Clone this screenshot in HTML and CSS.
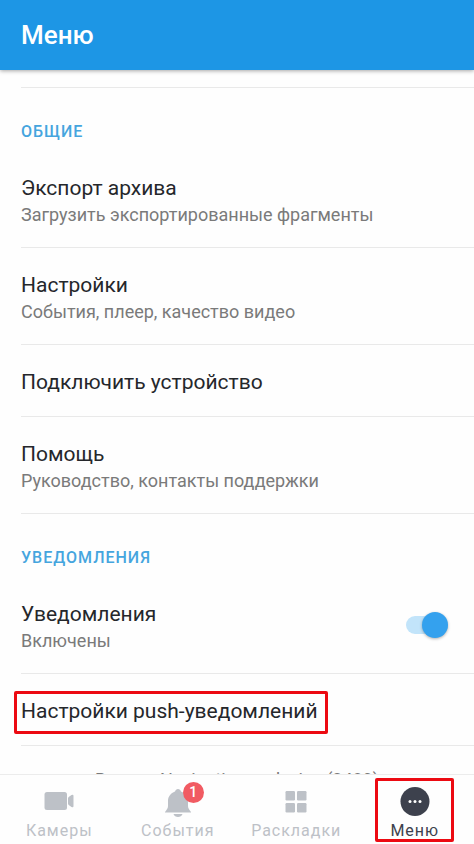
FILE: index.html
```html
<!DOCTYPE html>
<html lang="ru">
<head>
<meta charset="utf-8">
<meta name="viewport" content="width=device-width, initial-scale=1">
<title>Меню</title>
<link rel="stylesheet" href="styles.css">
</head>
<body>
<header class="app-bar"><h1>Меню</h1></header>
<main class="content">
  <section class="group">
    <h2 class="group-title">Общие</h2>
    <a class="row" href="#"><span class="title">Экспорт архива</span><span class="note">Загрузить экспортированные фрагменты</span></a>
    <a class="row" href="#"><span class="title">Настройки</span><span class="note">События, плеер, качество видео</span></a>
    <a class="row" href="#"><span class="title">Подключить устройство</span></a>
    <a class="row" href="#"><span class="title">Помощь</span><span class="note">Руководство, контакты поддержки</span></a>
  </section>
  <section class="group">
    <h2 class="group-title">Уведомления</h2>
    <div class="row row-switch">
      <label class="switch-label" for="notifications"><span class="title">Уведомления</span><span class="note">Включены</span></label>
      <input class="switch" id="notifications" type="checkbox" role="switch" checked>
    </div>
    <a class="row" href="#"><span class="title marked">Настройки push-уведомлений</span></a>
  </section>
  <p class="version">Версия Navigation andevice (2489)</p>
</main>
<nav class="tabs">
  <a class="tab" href="#">
    <svg class="icon" viewBox="0 0 32 32" aria-hidden="true"><rect x="1.500" y="7" width="22.500" height="18" rx="2.500"/><path d="M25 13.500Q25 12.500 26 11.800L28.500 10Q30.500 9 30.500 11V21Q30.500 23 28.500 22L26 20.200Q25 19.500 25 18.500Z"/></svg>
    <span>Камеры</span>
  </a>
  <a class="tab" href="#">
    <span class="icon-wrap">
      <svg class="icon" viewBox="0 0 32 32" aria-hidden="true"><path d="M16 4C14.500 4 13.500 5 13 6.500C8.800 8 6 11.500 6 16V21C6 23 5 24.500 3 27V27.500H29V27C27 24.500 26 23 26 21V16C26 11.500 23.200 8 19 6.500C18.500 5 17.500 4 16 4ZM11.500 29H20.500C19.500 33 12.500 33 11.500 29Z"/></svg>
      <span class="badge">1</span>
    </span>
    <span>События</span>
  </a>
  <a class="tab" href="#">
    <svg class="icon" viewBox="0 0 32 32" aria-hidden="true"><rect x="5.500" y="6" width="9.500" height="9.500" rx="1.200"/><rect x="17" y="6" width="9.500" height="9.500" rx="1.200"/><rect x="5.500" y="18" width="9.500" height="9.500" rx="1.200"/><rect x="17" y="18" width="9.500" height="9.500" rx="1.200"/></svg>
    <span>Раскладки</span>
  </a>
  <a class="tab tab-active" href="#" aria-current="page">
    <svg class="icon" viewBox="0 0 32 32" aria-hidden="true"><circle cx="16" cy="16.500" r="14.500"/><g fill="#fff"><circle cx="11" cy="16.500" r="1.500"/><circle cx="16" cy="16.500" r="1.500"/><circle cx="21" cy="16.500" r="1.500"/></g></svg>
    <span>Меню</span>
  </a>
</nav>
</body>
</html>
```
FILE: styles.css
```css
* { box-sizing: border-box; }

body {
  margin: 0;
  height: 100vh;
  display: flex;
  flex-direction: column;
  background: #fefefe;
  color: #25272b;
  font-family: Roboto, "Liberation Sans", sans-serif;
}

a { color: inherit; text-decoration: none; }
h1, h2, p { margin: 0; }

.app-bar {
  flex: none;
  height: 70px;
  padding: 0 21px;
  display: flex;
  align-items: center;
  background: #1d96e5;
  color: #fff;
  box-shadow: 0 1px 4px rgba(0, 0, 0, 0.35);
  z-index: 1;
}

.app-bar h1 { font-size: 26px; line-height: 32px; font-weight: 500; }

.content {
  flex: 1;
  min-height: 0;
  overflow: hidden;
  padding-top: 17px;
}

.group { margin-left: 21px; }
.group:first-child { border-top: 1px solid #e9e9e9; }

.group-title {
  padding: 34px 0 9px;
  font-size: 16px;
  line-height: 20px;
  font-weight: 500;
  letter-spacing: 1px;
  text-transform: uppercase;
  color: #45a5de;
}

.row {
  display: flex;
  flex-direction: column;
  align-items: flex-start;
  padding: 24px 0 20px;
  border-bottom: 1px solid #e9e9e9;
}

.title { font-size: 21px; line-height: 27px; }
.note { font-size: 18px; line-height: 25px; color: #7a7a7a; }

.row-switch {
  flex-direction: row;
  align-items: center;
  justify-content: space-between;
  padding-right: 26px;
}

.switch-label { display: flex; flex-direction: column; }

.switch {
  appearance: none;
  position: relative;
  width: 42px;
  height: 18px;
  margin: 0 0 4px;
  border-radius: 9px;
  background: #c2e4fa;
}

.switch::before {
  content: "";
  position: absolute;
  right: 0;
  top: -4px;
  width: 26px;
  height: 26px;
  border-radius: 50%;
  background: #34a1ee;
  box-shadow: 0 1px 3px rgba(0, 0, 0, 0.3);
}

.marked, .tab-active { position: relative; }

.marked::after,
.tab-active::after {
  content: "";
  position: absolute;
  border: 3px solid #ec0a12;
  border-radius: 2px;
}

.marked::after { inset: -7px -10px -9px -7px; }
.tab-active::after { inset: 3px 20px 2px 19px; }

.version {
  padding-top: 21px;
  text-align: center;
  font-size: 18px;
  line-height: 25px;
  color: #7a7a7a;
}

.tabs {
  flex: none;
  height: 70px;
  display: grid;
  grid-template-columns: repeat(4, 1fr);
  border-top: 1px solid #ececec;
  background: #fefefe;
  color: #bdc1c7;
  z-index: 1;
}

.tab {
  display: flex;
  flex-direction: column;
  align-items: center;
  padding-top: 10px;
  font-size: 16px;
  line-height: 27px;
}

.tab-active { color: #3d414d; }
.tab > span:last-child { letter-spacing: 1px; }
.icon { display: block; width: 32px; height: 32px; fill: currentColor; }
.icon-wrap { position: relative; }

.badge {
  position: absolute;
  left: 21px;
  top: -3px;
  width: 21px;
  height: 21px;
  border-radius: 50%;
  background: #f15b62;
  color: #fff;
  font-size: 14px;
  line-height: 21px;
  font-weight: 500;
  text-align: center;
}
```
